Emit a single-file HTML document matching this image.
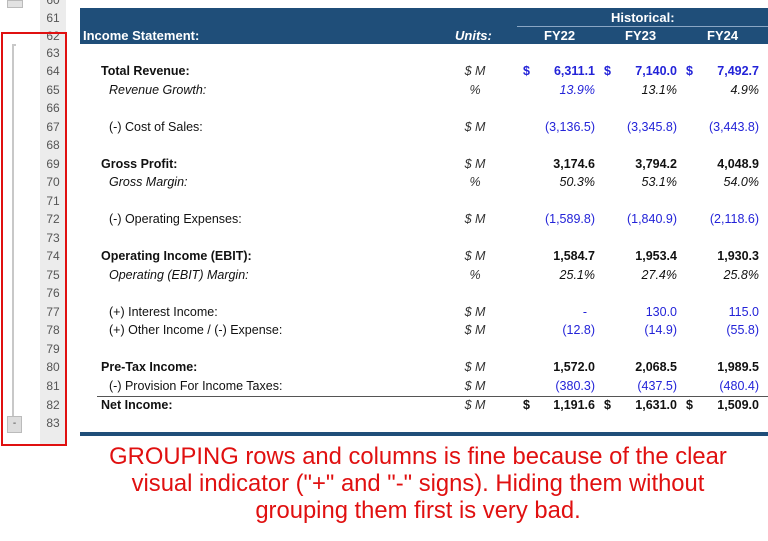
<!DOCTYPE html>
<html><head><meta charset="utf-8"><style>
body{margin:0;width:768px;height:541px;background:#fff;position:relative;overflow:hidden;font-family:"Liberation Sans",sans-serif;font-size:12.5px;color:#111}
.a{position:absolute;white-space:nowrap;line-height:18px}
.rn{position:absolute;left:40px;width:26px;text-align:center;color:#555;font-size:12px;line-height:18px}
.b{font-weight:bold}.i{font-style:italic}.bl{color:#2323d8}
.u{left:458px;width:34px;text-align:center;font-style:italic;color:#333}
.c1{right:173px;text-align:right}.c2{right:91px;text-align:right}.c3{right:9px;text-align:right}
.d1{left:523px}.d2{left:604px}.d3{left:686px}
</style></head><body>
<div style="position:absolute;left:40px;top:0;width:26px;height:445px;background:#ececec"></div>
<div style="position:absolute;left:7px;top:0;width:14px;height:6px;background:#e2e2e2;border:1px solid #bbb"></div>
<div class="rn" style="top:-9px">60</div>
<div class="rn" style="top:9px">61</div>
<div class="rn" style="top:27px">62</div>
<div style="position:absolute;left:1px;top:32px;width:62px;height:410px;border:2px solid #e01010"></div>
<div style="position:absolute;left:12px;top:44px;width:2px;height:372px;background:#c8c8c8"></div>
<div style="position:absolute;left:12px;top:44px;width:4px;height:2px;background:#c8c8c8"></div>
<div style="position:absolute;left:7px;top:416px;width:13px;height:15px;background:#ddd;border:1px solid #bbb;font-size:10px;text-align:center;line-height:14px;color:#444">-</div>
<div style="position:absolute;left:80px;top:8px;width:688px;height:36px;background:#1f4e79"></div>
<div style="position:absolute;left:517px;top:26px;width:251px;height:1px;background:#8aa6c4"></div>
<div class="a b" style="left:611px;top:9px;color:#fff;font-size:13px">Historical:</div>
<div class="a b" style="left:83px;top:27px;color:#fff;font-size:13px">Income Statement:</div>
<div class="a b i" style="left:455px;top:27px;color:#fff;font-size:13px">Units:</div>
<div class="a b" style="left:544px;top:27px;color:#fff;font-size:13px">FY22</div>
<div class="a b" style="left:625px;top:27px;color:#fff;font-size:13px">FY23</div>
<div class="a b" style="left:707px;top:27px;color:#fff;font-size:13px">FY24</div>
<div style="position:absolute;left:97px;top:396px;width:671px;height:1px;background:#555"></div>
<div style="position:absolute;left:80px;top:432px;width:688px;height:4px;background:#1f4e79"></div>
<div class="a b" style="left:101px;top:62px">Total Revenue:</div>
<div class="a u" style="top:62px">$ M</div>
<div class="a b bl d1" style="top:62px">$</div><div class="a b bl d2" style="top:62px">$</div><div class="a b bl d3" style="top:62px">$</div>
<div class="a b bl c1" style="top:62px">6,311.1</div><div class="a b bl c2" style="top:62px">7,140.0</div><div class="a b bl c3" style="top:62px">7,492.7</div>
<div class="a i" style="left:109px;top:81px">Revenue Growth:</div>
<div class="a u" style="top:81px">%</div>
<div class="a i bl c1" style="top:81px">13.9%</div><div class="a i c2" style="top:81px">13.1%</div><div class="a i c3" style="top:81px">4.9%</div>
<div class="a" style="left:109px;top:118px">(-) Cost of Sales:</div>
<div class="a u" style="top:118px">$ M</div>
<div class="a bl c1" style="top:118px">(3,136.5)</div><div class="a bl c2" style="top:118px">(3,345.8)</div><div class="a bl c3" style="top:118px">(3,443.8)</div>
<div class="a b" style="left:101px;top:155px">Gross Profit:</div>
<div class="a u" style="top:155px">$ M</div>
<div class="a b c1" style="top:155px">3,174.6</div><div class="a b c2" style="top:155px">3,794.2</div><div class="a b c3" style="top:155px">4,048.9</div>
<div class="a i" style="left:109px;top:173px">Gross Margin:</div>
<div class="a u" style="top:173px">%</div>
<div class="a i c1" style="top:173px">50.3%</div><div class="a i c2" style="top:173px">53.1%</div><div class="a i c3" style="top:173px">54.0%</div>
<div class="a" style="left:109px;top:210px">(-) Operating Expenses:</div>
<div class="a u" style="top:210px">$ M</div>
<div class="a bl c1" style="top:210px">(1,589.8)</div><div class="a bl c2" style="top:210px">(1,840.9)</div><div class="a bl c3" style="top:210px">(2,118.6)</div>
<div class="a b" style="left:101px;top:247px">Operating Income (EBIT):</div>
<div class="a u" style="top:247px">$ M</div>
<div class="a b c1" style="top:247px">1,584.7</div><div class="a b c2" style="top:247px">1,953.4</div><div class="a b c3" style="top:247px">1,930.3</div>
<div class="a i" style="left:109px;top:266px">Operating (EBIT) Margin:</div>
<div class="a u" style="top:266px">%</div>
<div class="a i c1" style="top:266px">25.1%</div><div class="a i c2" style="top:266px">27.4%</div><div class="a i c3" style="top:266px">25.8%</div>
<div class="a" style="left:109px;top:303px">(+) Interest Income:</div>
<div class="a u" style="top:303px">$ M</div>
<div class="a bl c1" style="top:303px;right:181px">-</div><div class="a bl c2" style="top:303px">130.0</div><div class="a bl c3" style="top:303px">115.0</div>
<div class="a" style="left:109px;top:321px">(+) Other Income / (-) Expense:</div>
<div class="a u" style="top:321px">$ M</div>
<div class="a bl c1" style="top:321px">(12.8)</div><div class="a bl c2" style="top:321px">(14.9)</div><div class="a bl c3" style="top:321px">(55.8)</div>
<div class="a b" style="left:101px;top:358px">Pre-Tax Income:</div>
<div class="a u" style="top:358px">$ M</div>
<div class="a b c1" style="top:358px">1,572.0</div><div class="a b c2" style="top:358px">2,068.5</div><div class="a b c3" style="top:358px">1,989.5</div>
<div class="a" style="left:109px;top:377px">(-) Provision For Income Taxes:</div>
<div class="a u" style="top:377px">$ M</div>
<div class="a bl c1" style="top:377px">(380.3)</div><div class="a bl c2" style="top:377px">(437.5)</div><div class="a bl c3" style="top:377px">(480.4)</div>
<div class="a b" style="left:101px;top:396px">Net Income:</div>
<div class="a u" style="top:396px">$ M</div>
<div class="a b d1" style="top:396px">$</div><div class="a b d2" style="top:396px">$</div><div class="a b d3" style="top:396px">$</div>
<div class="a b c1" style="top:396px">1,191.6</div><div class="a b c2" style="top:396px">1,631.0</div><div class="a b c3" style="top:396px">1,509.0</div>
<div style="position:absolute;left:68px;top:443px;width:700px;text-align:center;color:#e01010;font-size:23.8px;line-height:27px;white-space:nowrap">GROUPING rows and columns is fine because of the clear<br>visual indicator ("+" and "-" signs). Hiding them without<br>grouping them first is very bad.</div>
<div class="rn" style="top:44px">63</div><div class="rn" style="top:62px">64</div><div class="rn" style="top:81px">65</div><div class="rn" style="top:99px">66</div><div class="rn" style="top:118px">67</div><div class="rn" style="top:136px">68</div><div class="rn" style="top:155px">69</div><div class="rn" style="top:173px">70</div><div class="rn" style="top:192px">71</div><div class="rn" style="top:210px">72</div><div class="rn" style="top:229px">73</div><div class="rn" style="top:247px">74</div><div class="rn" style="top:266px">75</div><div class="rn" style="top:284px">76</div><div class="rn" style="top:303px">77</div><div class="rn" style="top:321px">78</div><div class="rn" style="top:340px">79</div><div class="rn" style="top:358px">80</div><div class="rn" style="top:377px">81</div><div class="rn" style="top:396px">82</div><div class="rn" style="top:414px">83</div>
</body></html>
